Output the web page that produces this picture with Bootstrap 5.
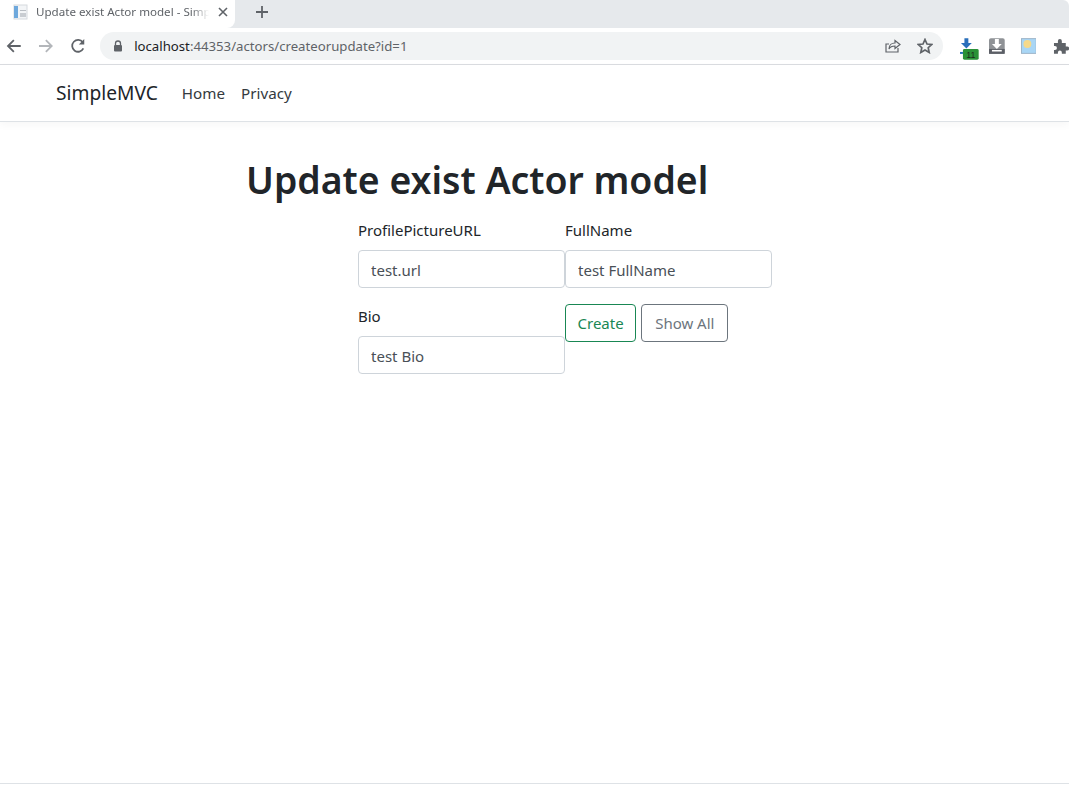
<!DOCTYPE html>
<html lang="en">
<head>
<meta charset="utf-8">
<title>Update exist Actor model - SimpleMVC</title>
<link href="https://cdn.jsdelivr.net/npm/bootstrap@5.3.0/dist/css/bootstrap.min.css" rel="stylesheet">
<style>
html,body{height:100%;overflow:hidden}
body{font-family:"Noto Sans","Open Sans",sans-serif;color:#212529;background:#fff;font-size:16px}
.shell{height:804px}
.tabstrip{height:28px;background:#e6e9ec;border-top-right-radius:6px;padding-bottom:4px}
.chrome-tab{width:235px;height:28px;margin-bottom:-4px;padding-bottom:4px;background:#fff;border-bottom-right-radius:8px;padding-left:13px;font-size:11.6px;color:#5f6368;white-space:nowrap}
.tab-title{width:173px;margin-left:7px;margin-right:9px;-webkit-mask-image:linear-gradient(90deg,#000 90%,transparent);mask-image:linear-gradient(90deg,#000 90%,transparent)}
.plus-btn{margin-left:20px}
.toolbar{height:37px;background:#fff;border-bottom:1px solid #dadce0;padding-left:6px}
.reload-icon{margin-left:17px}
.omni{width:843px;height:28px;background:#f1f3f4;border-radius:14px;margin-left:14px;padding:0 10px 0 13px;font-size:13.2px;color:#5f6368}
.omni b{font-weight:400;color:#202124}
.omni-url{margin-left:11px;padding-top:1px}
.navwrap{height:57px;border-bottom:1px solid #dee2e6;box-shadow:0 3px 8px rgba(0,0,0,.035);padding-left:56px}
.brandlink{font-size:19.2px;color:#212529;text-decoration:none;margin-right:24px}
.navlink{font-size:15.2px;color:#343a40;text-decoration:none;margin-right:16px}
.pagebody{height:662px;border-bottom:1px solid #dee2e6;padding-left:246px;padding-top:34px}
.headline{font-size:37.4px;font-weight:600;line-height:48px;margin:0 0 14px;white-space:nowrap}
.formgrid{margin-left:112px;width:414px}
.fcol{width:207px}
.flabel{font-size:15px;line-height:24px;margin-bottom:8px;display:block}
.finput{height:38px;font-size:15px;color:#495057;font-family:inherit;border-color:#ced4da;padding:7px 12px 5px;border-radius:4px}
.fgroup{margin-bottom:16px}
.actbtn{height:38px;font-size:15px;padding:0 11.5px;border-radius:4px;line-height:36px}
.fcol .btn-outline-success{color:#198754;border-color:#198754}
.fcol .btn-outline-secondary{color:#6c757d;border-color:#6c757d;padding:0 13px}
.btnrow{gap:5px}
.badge-ext{margin-left:17px;margin-top:6px}
.ext{margin-left:9px}
.ext-two{margin-left:16px}
.ext-three{margin-left:17px}
</style>
</head>
<body>
<div class="shell d-flex flex-column">
  <div class="tabstrip d-flex align-items-center flex-shrink-0">
    <div class="chrome-tab d-flex align-items-center">
      <svg width="16" height="16" viewBox="0 0 16 16"><rect x="1" y="1" width="13" height="14" fill="#f3f5f7" stroke="#d5d9de"/><rect x="1" y="2" width="4" height="12" fill="#6ea8dc"/><rect x="7" y="6" width="6" height="1" fill="#b9bec4"/><rect x="7" y="9" width="6" height="4" fill="#c9cdd2"/></svg>
      <div class="tab-title">Update exist Actor model - Simpl</div>
      <svg width="10" height="10" viewBox="0 0 10 10"><path d="M1 1l8 8M9 1l-8 8" stroke="#5f6368" stroke-width="1.6"/></svg>
    </div>
    <svg class="plus-btn" width="14" height="14" viewBox="0 0 14 14"><path d="M7 1v12M1 7h12" stroke="#5f6368" stroke-width="1.8"/></svg>
  </div>
  <div class="toolbar d-flex align-items-center flex-shrink-0">
    <svg width="16" height="16" viewBox="0 0 16 16"><path d="M15 8H2M8 2L2 8l6 6" fill="none" stroke="#5f6368" stroke-width="1.8"/></svg>
    <svg class="ms-3" width="16" height="16" viewBox="0 0 16 16"><path d="M1 8h13M8 2l6 6-6 6" fill="none" stroke="#b3b6ba" stroke-width="1.8"/></svg>
    <svg class="reload-icon" width="16" height="16" viewBox="0 0 16 16"><path d="M13.6 10.500A6 6 0 1 1 13 4.200" fill="none" stroke="#5f6368" stroke-width="1.8"/><path d="M14.500 1v5.500H9z" fill="#5f6368"/></svg>
    <div class="omni d-flex align-items-center flex-shrink-0">
      <svg width="10" height="12" viewBox="0 0 10 12"><path d="M2.500 5V3.500a2.500 2.500 0 0 1 5 0V5" fill="none" stroke="#5f6368" stroke-width="1.3"/><rect x="1" y="5" width="8" height="6.500" rx="1" fill="#5f6368"/></svg>
      <span class="omni-url"><b>localhost</b>:44353/actors/createorupdate?id=1</span>
      <svg class="ms-auto" width="16" height="16" viewBox="0 0 16 16"><path d="M13 10v4H1V6h3" fill="none" stroke="#5f6368" stroke-width="1.2"/><path d="M4 11c0-4 3-6 6-6V2.500l5 4-5 4V8c-3 0-5 1-6 3z" fill="none" stroke="#5f6368" stroke-width="1.2"/></svg>
      <svg class="ms-3" width="16" height="16" viewBox="0 0 16 16"><path d="M8 1.500l2 4.500 4.800.5-3.600 3.200 1 4.800L8 12.100l-4.200 2.400 1-4.800L1.200 6.500 6 6z" fill="none" stroke="#5f6368" stroke-width="1.700"/></svg>
    </div>
    <svg class="badge-ext" width="20" height="22" viewBox="0 0 20 22"><path d="M4.500 0h4v5h3.500l-5.500 5.500L1 5h3.500z" fill="#2a6fbb"/><rect x="0" y="14" width="3" height="2" fill="#2a6fbb"/><rect x="3" y="11" width="16" height="11" rx="1.500" fill="#2a9138"/><text x="11" y="20" font-size="9" text-anchor="middle" fill="#1c2b1f" font-family="Liberation Sans">11</text></svg>
    <svg class="ext" width="16" height="16" viewBox="0 0 16 16"><rect width="16" height="16" rx="2" fill="#8f9296"/><rect y="11" width="16" height="5" fill="#5c5f66"/><path d="M6 1h4v5h3l-5 5-5-5h3z" fill="#fff"/><rect x="3" y="12" width="10" height="1.600" fill="#fff"/></svg>
    <svg class="ext ext-two" width="16" height="16" viewBox="0 0 16 16"><rect x=".5" y=".5" width="15" height="15" fill="#a9d6f5" stroke="#9db4c8"/><circle cx="6.500" cy="6" r="4" fill="#f6d98a"/></svg>
    <svg class="ext ext-three" width="16" height="16" viewBox="0 0 16 16"><path d="M1 5h4V3a2 2 0 0 1 4 0v2h4v3.500h1.500a2 2 0 0 1 0 4H13V16H9v-1.500a2 2 0 0 0-4 0V16H1v-4h1a2 2 0 0 0 0-4H1z" fill="#5f6368"/></svg>
  </div>
  <nav class="navwrap d-flex align-items-center flex-shrink-0 bg-white">
    <a class="brandlink" href="#">SimpleMVC</a>
    <a class="navlink" href="#">Home</a>
    <a class="navlink" href="#">Privacy</a>
  </nav>
  <main class="pagebody flex-shrink-0">
    <h1 class="headline">Update exist Actor model</h1>
    <form class="formgrid d-flex">
      <div class="fcol">
        <div class="fgroup"><label class="flabel">ProfilePictureURL</label><input class="form-control finput" value="test.url"></div>
        <div class="fgroup"><label class="flabel">Bio</label><input class="form-control finput" value="test Bio"></div>
      </div>
      <div class="fcol">
        <div class="fgroup"><label class="flabel">FullName</label><input class="form-control finput" value="test FullName"></div>
        <div class="d-flex btnrow">
          <button type="button" class="btn btn-outline-success actbtn">Create</button>
          <button type="button" class="btn btn-outline-secondary actbtn">Show All</button>
        </div>
      </div>
    </form>
  </main>
</div>
<script src="https://cdn.jsdelivr.net/npm/bootstrap@5.3.0/dist/js/bootstrap.bundle.min.js"></script>
</body>
</html>
